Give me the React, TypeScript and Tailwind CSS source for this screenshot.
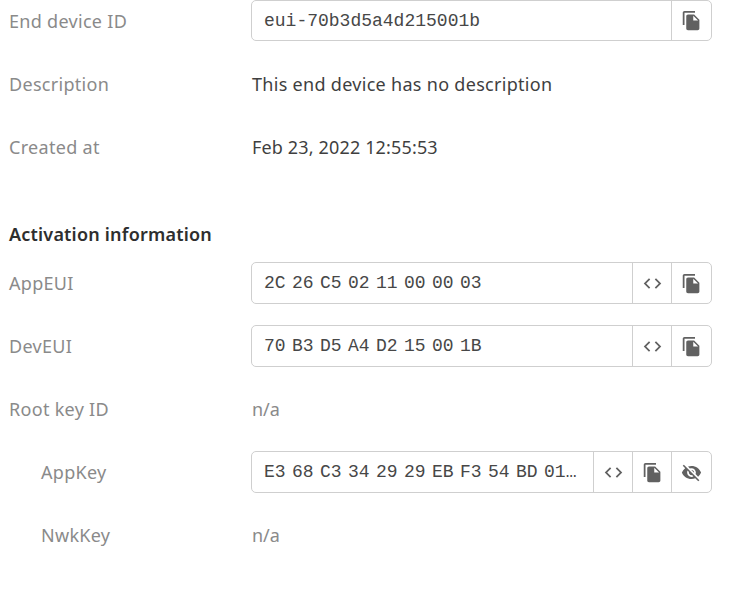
import { MdCode, MdFileCopy, MdVisibilityOff } from "react-icons/md";

type ActionName = "code" | "copy" | "eye";

function Action({ icon }: { icon: ActionName }) {
  return (
    <div className="flex h-full w-[39px] shrink-0 items-center justify-center border-l border-[#cfcfcf] text-[#616161] last:w-[40px]">
      {icon === "code" && <MdCode size={21} />}
      {icon === "copy" && <MdFileCopy size={21} />}
      {icon === "eye" && <MdVisibilityOff size={21} />}
    </div>
  );
}

function ValueBox({ value, actions, hex, short }: { value: string; actions: ActionName[]; hex?: boolean; short?: boolean }) {
  return (
    <div className={`flex w-[461px] items-center rounded-[5px] border border-[#cfcfcf] bg-white ${short ? "h-[41px] self-start" : "h-[42px]"}`}>
      <div className={`min-w-0 flex-1 overflow-hidden whitespace-nowrap pt-px pl-3 font-['Liberation_Mono',monospace] text-[18px] text-[#474747] ${hex ? "[word-spacing:-4.4px]" : ""}`}>
        {value}
      </div>
      {actions.map((a) => (
        <Action key={a} icon={a} />
      ))}
    </div>
  );
}

function Row({ label, indent, children }: { label: string; indent?: boolean; children: React.ReactNode }) {
  return (
    <div className="flex h-[42px] items-center">
      <div className={`w-[242px] shrink-0 text-[18px] tracking-[0.3px] text-[#8a8a8a] ${indent ? "pl-[32px]" : ""}`}>{label}</div>
      {children}
    </div>
  );
}

export default function App() {
  return (
    <div className="h-[592px] w-[737px] overflow-hidden bg-white pl-[9px] pr-[25px] font-['Noto_Sans','Open_Sans',sans-serif]">
      <div className="flex flex-col gap-[21px]">
        <Row label="End device ID">
          <ValueBox value="eui-70b3d5a4d215001b" actions={["copy"]} short />
        </Row>
        <Row label="Description">
          <span className="pl-px text-[18px] tracking-[0.3px] text-[#3f3f3f]">This end device has no description</span>
        </Row>
        <Row label="Created at">
          <span className="pl-px text-[18px] tracking-[0.15px] text-[#3f3f3f]">Feb 23, 2022 12:55:53</span>
        </Row>
      </div>
      <h3 className="mt-[52px] mb-[14px] h-[28px] text-[18px] leading-[28px] font-semibold tracking-[0.2px] text-[#2e2e2e]">
        Activation information
      </h3>
      <div className="flex flex-col gap-[21px]">
        <Row label="AppEUI">
          <ValueBox hex value="2C 26 C5 02 11 00 00 03" actions={["code", "copy"]} />
        </Row>
        <Row label="DevEUI">
          <ValueBox hex value="70 B3 D5 A4 D2 15 00 1B" actions={["code", "copy"]} />
        </Row>
        <Row label="Root key ID">
          <span className="pl-px text-[18px] text-[#8a8a8a]">n/a</span>
        </Row>
        <Row label="AppKey" indent>
          <ValueBox hex value="E3 68 C3 34 29 29 EB F3 54 BD 01…" actions={["code", "copy", "eye"]} />
        </Row>
        <Row label="NwkKey" indent>
          <span className="pl-px text-[18px] text-[#8a8a8a]">n/a</span>
        </Row>
      </div>
    </div>
  );
}
